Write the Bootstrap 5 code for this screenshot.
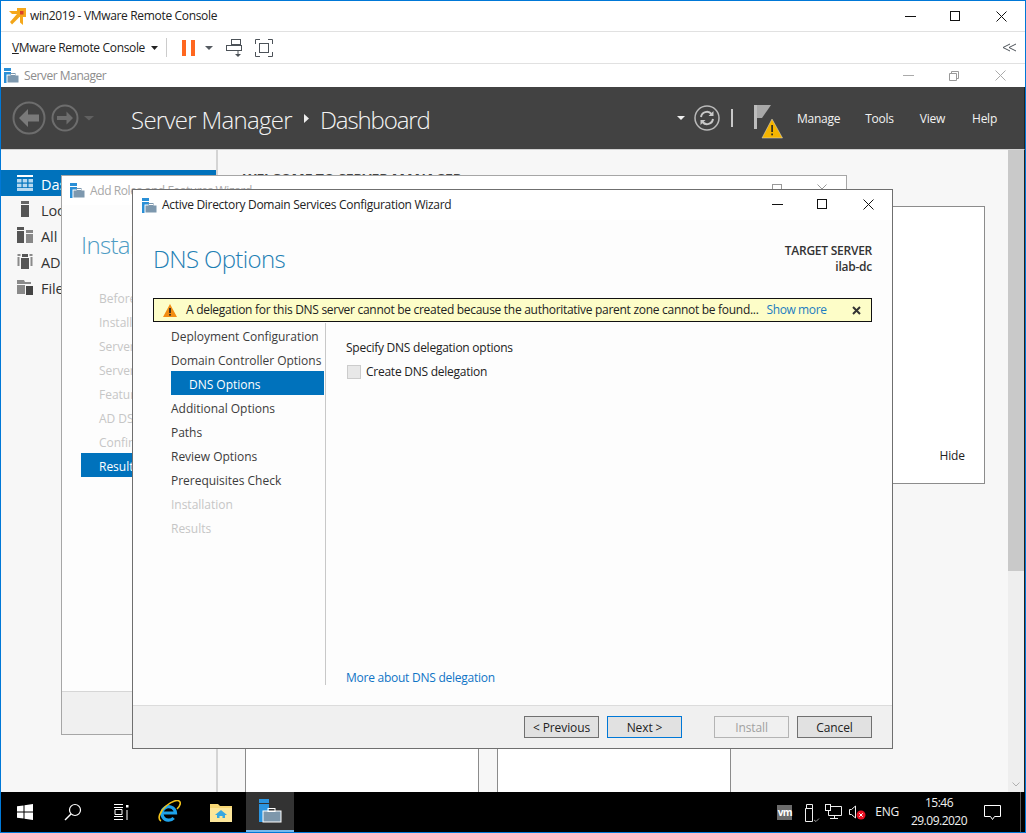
<!DOCTYPE html>
<html lang="en">
<head>
  <meta charset="UTF-8" />
  <title>win2019 - VMware Remote Console</title>
  <meta name="viewport" content="width=device-width, initial-scale=1" />
  <link href="https://cdn.jsdelivr.net/npm/bootstrap@5.3.3/dist/css/bootstrap.min.css" rel="stylesheet" />
  <script src="https://cdn.jsdelivr.net/npm/bootstrap@5.3.3/dist/js/bootstrap.bundle.min.js"></script>
  <style>
    html, body { margin: 0; background: #fff; overflow: hidden; }
    body { font-family: "Open Sans", "Liberation Sans", sans-serif; font-size: 12px; color: #222; line-height: 16px; letter-spacing: -.25px; }
    svg { display: block; flex: none; }

    /* spacing the grid utilities have no step for */
    .l7 { margin-left: 7px; } .l9 { margin-left: 9px; } .l5 { margin-left: 5px; } .l8 { margin-left: 8px; }
    .l10 { margin-left: 10px; } .l12 { margin-left: 12px; } .l13 { margin-left: 13px; }
    .l25 { margin-left: 25px; } .l26 { margin-left: 26px; } .l27 { margin-left: 27px; } .l32 { margin-left: 32px; } .l36 { margin-left: 36px; }
    .r9 { margin-right: 9px; } .r18 { margin-right: 18px; } .r19 { margin-right: 19px; }
    .r34 { margin-right: 34px; } .r35 { margin-right: 35px; } .r36 { margin-right: 36px; }

    /* outer vmrc window */
    .shell { position: relative; width: 1026px; height: 833px; border: 1px solid #0078d7; display: flex; flex-direction: column; overflow: hidden; }
    .vm-title { height: 31px; padding-left: 8px; border-bottom: 1px solid #e1e1e1; flex: none; letter-spacing: -.33px; }
    .vm-title span { margin-left: 4px; }
    .vm-tools { height: 32px; padding-left: 11px; border-bottom: 1px solid #e1e1e1; flex: none; letter-spacing: -.34px; }
    .vm-tools .under { text-decoration: underline; }
    .tool-caret { margin-left: 6px; }
    .tool-sep { width: 1px; height: 19px; background: #ccc; margin: 0 15px 0 8px; }
    .sm-title { height: 23px; padding-left: 3px; color: #8d8d8d; flex: none; letter-spacing: -.45px; }
    .sm-title span { margin-left: 5px; }
    .win-ctl { margin-left: auto; }

    /* server manager banner */
    .sm-bar { height: 63px; background: #424242; border-bottom: 1px solid #d2d2d2; border-right: 1px solid #222; flex: none; color: #fff; padding-left: 11px; }
    .sm-crumb { font-weight: 300; font-size: 24px; line-height: 30px; color: #f4f4f4; letter-spacing: -.7px; margin-top: 3px; }
    .crumb-first { margin-left: 36px; }
    .crumb-last { letter-spacing: -1.1px; }
    .crumb-arrow { margin: 0 11px 0 12px; }
    .sm-menu { font-size: 12px; color: #f2f2f2; padding-right: 27px; }
    .sm-menu span { margin-top: 2px; }
    .bar-rule { width: 2px; height: 18px; background: #c8c8c8; margin: 0 21px 0 11px; }
    .bar-flag { margin: 7px 13px 0 0; }

    /* server manager body */
    .sm-body { flex: 1 1 auto; min-height: 0; background: #f7f7f7; border-right: 1px solid #222; }
    .sm-side { width: 217px; flex: none; padding-top: 20px; border-right: 2px solid #d4d4d4; }
    .side-row { height: 26px; padding-left: 16px; font-size: 14.5px; white-space: nowrap; color: #333; overflow: hidden; letter-spacing: -.1px; }
    .side-row span { margin-left: 8px; padding-top: 3px; }
    .side-on { background: #0072bc; color: #fff; }
    .sm-main { width: 790px; flex: none; padding: 19px 0 0 25px; overflow: hidden; }
    .welcome { font-size: 14px; font-weight: 700; color: #444; line-height: 20px; letter-spacing: -.15px; white-space: nowrap; }
    .hide-box { width: 742px; height: 278px; margin-top: 17px; background: #fff; border: 1px solid #8c8c8c; padding-right: 19px; letter-spacing: -.1px; }
    .hide-box span { margin-top: 241px; }
    .sm-pair { margin: 16px 0 0 2px; gap: 18px; }
    .sm-tile { width: 234px; height: 400px; background: #fff; border: 1px solid #8c8c8c; }
    .sm-scroll { width: 16px; flex: none; background: #eee; display: flex; flex-direction: column; }
    .sm-thumb { height: 421px; background: #c9c9c9; }
    .sm-scroll svg { margin: auto 4px 5px; }

    /* taskbar */
    .taskbar { height: 40px; background: #000; flex: none; color: #f0f0f0; position: relative; }
    .tb-slot { width: 48px; height: 40px; display: flex; align-items: center; justify-content: center; flex: none; }
    .tb-wide { width: 53px; padding-left: 3px; }
    .tb-active { background: #333; border-bottom: 2px solid #76b9ed; }
    .tb-vm { width: 15px; height: 15px; background: #6b6b6b; color: #fff; font-size: 10px; font-weight: 700; line-height: 15px; text-align: center; letter-spacing: -.8px; }
    .tb-clock { width: 66px; text-align: center; line-height: 18px; margin-left: 7px; letter-spacing: -.5px; }
    .tb-note { margin: 0 19px 0 12px; }
    .tb-desk { width: 1px; align-self: stretch; background: #555; margin-right: 4px; }

    /* wizards sit over the desktop at their own place */
    .wiz { position: absolute; display: flex; flex-direction: column; background: #fdfdfd; }
    .wiz-back { left: 60px; top: 174px; width: 786px; height: 560px; border: 1px solid #a6a6a6; }
    .wiz-front { left: 131px; top: 188px; width: 761px; height: 560px; border: 1px solid #6f6f6f; }
    .wiz-title { height: 30px; background: #fff; padding-left: 9px; flex: none; letter-spacing: -.3px; }
    .wiz-title span { margin-left: 5px; }
    .wiz-front .win-ctl { margin-bottom: 2px; }
    .wiz-back .wiz-title { height: 29px; padding-left: 8px; color: #a8a8a8; letter-spacing: -.4px; }
    .wiz-back .win-ctl { margin-bottom: 4px; }
    .wiz-h1 { font-weight: 300; font-size: 24px; line-height: 32px; color: #1e80b4; letter-spacing: -.65px; }
    .wiz-back .wiz-h1 { color: #4d9cc4; margin: 24px 0 0 19px; }
    .back-nav { margin: 24px 0 0 19px; width: 240px; flex: 1 1 auto; }
    .back-nav .step { line-height: 28px; }
    .wiz-foot-back { height: 43px; background: #f0f0f0; border-top: 1px solid #d6d6d6; flex: none; }
    .step { height: 24px; line-height: 28px; white-space: nowrap; color: #3c3c3c; letter-spacing: -.02px; }
    .step-sub { padding-left: 18px; }
    .step-on { background: #0072bc; color: #fff; }
    .step-off { color: #c6c6c6; }

    .front-head { height: 78px; padding: 23px 20px 0 20px; flex: none; }
    .target { text-align: right; font-weight: 600; color: #333; line-height: 16px; }
    .warn-line { height: 24px; margin: 0 20px; background: #fdfdc8; border: 1px solid #111; padding: 0 10px 0 9px; flex: none; color: #222; white-space: nowrap; letter-spacing: -.29px; }
    .warn-line svg { margin-right: 9px; }
    .warn-more { color: #1b7cc0; margin-left: 8px; text-decoration: none; letter-spacing: -.4px; }
    .warn-line .warn-x { margin: 0 0 0 auto; }
    .front-body { flex: 1 1 auto; min-height: 0; padding-left: 38px; }
    .front-nav { width: 153px; flex: none; padding-top: 1px; }
    .front-rule { width: 1px; background: #c8c8c8; margin: 1px 0 20px 1px; flex: none; }
    .front-pane { flex: 1 1 auto; padding: 18px 0 19px 20px; }
    .dns-check { width: 14px; height: 14px; margin: 0 5px 0 1px; border: 1px solid #ccc; border-radius: 0 !important; background-color: #e8e8e8; opacity: 1 !important; }
    .pane-link { margin-top: auto; color: #0f74c6; text-decoration: none; }
    .wiz-foot { height: 43px; background: #f0f0f0; border-top: 1px solid #dcdcdc; padding: 10px 20px 0 0; flex: none; }
    .wiz-btn { width: 75px; height: 22px; padding: 0; font-size: 12px; line-height: 22px; border: 1px solid #707070; border-radius: 0; background: #e1e1e1; color: #222; letter-spacing: -.1px; }
    .wiz-btn-def { border-color: #0078d7; }
    .wiz-btn:disabled { opacity: 1; background: #f0f0f0; border-color: #b4b4b4; color: #a0a0a0; }
  </style>
</head>
<body>
<div class="shell">

  <!-- vmrc title -->
  <div class="vm-title d-flex align-items-center">
    <svg width="17" height="17" viewBox="0 0 17 17"><path d="M0 3h8v3H3z" fill="#f5a81c"/><path d="M8 6l2.500 3L3 16.500 1 14z" fill="#f2a519"/><path d="M11 9h3v8l-3-2.500z" fill="#f5a81c"/><rect x="8" width="9" height="9" fill="#f5a81c"/><rect x="11" y="3" width="3.500" height="3.500" fill="#d9442a"/></svg>
    <span>win2019 - VMware Remote Console</span>
    <div class="win-ctl d-flex">
      <svg class="r34" width="11" height="11" viewBox="0 0 11 11"><path d="M0 5.500h11" stroke="#111"/></svg>
      <svg class="r36" width="10" height="10" viewBox="0 0 10 10"><rect x=".5" y=".5" width="9" height="9" fill="none" stroke="#111"/></svg>
      <svg class="r18" width="11" height="11" viewBox="0 0 11 11"><path d="M.5.5l10 10M10.500.5l-10 10" stroke="#111"/></svg>
    </div>
  </div>

  <!-- vmrc toolbar -->
  <div class="vm-tools d-flex align-items-center">
    <span><span class="under">V</span>Mware Remote Console</span>
    <svg class="tool-caret" width="7" height="4" viewBox="0 0 7 4"><path d="M0 0h7L3.500 4z" fill="#222"/></svg>
    <div class="tool-sep"></div>
    <svg width="13" height="16" viewBox="0 0 13 16"><rect width="4" height="16" fill="#ff671f"/><rect x="9" width="4" height="16" fill="#ff671f"/></svg>
    <svg class="l10" width="8" height="4" viewBox="0 0 8 4"><path d="M0 0h8L4 4z" fill="#555b61"/></svg>
    <svg class="l13" width="17" height="18" viewBox="0 0 17 18"><g fill="none" stroke="#4c5258"><rect x="5.500" y=".5" width="9" height="5"/><rect x=".5" y="6.500" width="15" height="5"/></g><path d="M12 12v3" stroke="#4c5258"/><path d="M9 15h6l-3 3z" fill="#4c5258"/></svg>
    <svg class="l12" width="18" height="18" viewBox="0 0 18 18"><g fill="none" stroke="#4c5258"><path d="M.5 5V.5H5M13 .5h4.500V5M17.500 13v4.500H13M5 17.500H.5V13"/><rect x="4.500" y="4.500" width="9" height="9"/></g></svg>
    <svg class="win-ctl r9" width="14" height="9" viewBox="0 0 14 9"><path d="M8 1L1 4.500 8 8M14 1L7 4.500 14 8" fill="none" stroke="#4c5258"/></svg>
  </div>

  <!-- server manager title -->
  <div class="sm-title d-flex align-items-center">
    <svg width="15" height="15" viewBox="0 0 15 15"><rect width="7" height="3" fill="#2a8fd6"/><rect y="4" width="7" height="11" fill="#2a8fd6"/><rect x="3" y="7" width="12" height="8" fill="#7d98ae" stroke="#fff"/><rect x="7" y="5.500" width="4" height="2" fill="none" stroke="#7d98ae"/></svg>
    <span>Server Manager</span>
    <div class="win-ctl d-flex align-items-center">
      <svg class="r35" width="11" height="11" viewBox="0 0 11 11"><path d="M0 5.500h11" stroke="#aaa"/></svg>
      <svg class="r36" width="10" height="10" viewBox="0 0 10 10"><path d="M.5 2.500h7v7h-7zM2.500 2.500v-2h7v7h-2" fill="none" stroke="#999"/></svg>
      <svg class="r19" width="11" height="11" viewBox="0 0 11 11"><path d="M.5.5l10 10M10.500.5l-10 10" stroke="#aaa"/></svg>
    </div>
  </div>

  <!-- banner -->
  <div class="sm-bar d-flex align-items-center">
    <svg width="83" height="34" viewBox="0 0 83 34"><g fill="none" stroke="#6d6d6d"><circle cx="17" cy="17" r="15.500" stroke-width="2"/><circle cx="53" cy="17" r="12.500" stroke-width="2"/></g><path d="M7 17l9-9v5.500h11v7H16V26z" fill="#7a7a7a"/><path d="M61 17l-6.500-6.500V15H45v4h9.500v4.500z" fill="#6d6d6d"/><path d="M72 15h10l-5 4.500z" fill="#606060"/></svg>
    <div class="sm-crumb crumb-first">Server Manager</div>
    <svg class="crumb-arrow" width="5" height="9" viewBox="0 0 5 9"><path d="M0 0l5 4.500L0 9z" fill="#eee"/></svg>
    <div class="sm-crumb crumb-last">Dashboard</div>
    <div class="win-ctl d-flex align-items-center sm-menu">
      <svg width="8" height="4" viewBox="0 0 8 4"><path d="M0 0h8L4 4z" fill="#f0f0f0"/></svg>
      <svg class="l9" width="26" height="26" viewBox="0 0 26 26"><circle cx="13" cy="13" r="12" fill="none" stroke="#b9b9b9" stroke-width="1.500"/><path d="M7 12a6 6 0 0 1 10.500-3M19 14a6 6 0 0 1-10.500 3" fill="none" stroke="#c8c8c8" stroke-width="2"/><path d="M19.500 6v5h-5zM6.500 20v-5h5z" fill="#c8c8c8"/></svg>
      <div class="bar-rule"></div>
      <svg class="bar-flag" width="30" height="35" viewBox="0 0 30 35"><rect y="1" width="3" height="24" fill="#bdbdbd"/><path d="M3 1h14L8 14H3z" fill="#a8a8a8"/><path d="M18 15l10.500 19H8z" fill="#f5b400" stroke="#d9d9d9" stroke-width=".5"/><rect x="17.300" y="21" width="1.600" height="7" fill="#222"/><rect x="17.300" y="29.500" width="1.600" height="1.800" fill="#222"/></svg>
      <span>Manage</span><span class="l25">Tools</span><span class="l26">View</span><span class="l27">Help</span>
    </div>
  </div>

  <!-- desktop of server manager -->
  <div class="sm-body d-flex">
    <div class="sm-side">
      <div class="side-row side-on d-flex align-items-center"><svg width="16" height="16" viewBox="0 0 16 16"><rect width="16" height="2" fill="#fff"/><g fill="#b8d9f0"><rect y="4" width="4.500" height="3.500"/><rect x="5.700" y="4" width="4.500" height="3.500"/><rect x="11.500" y="4" width="4.500" height="3.500"/><rect y="8.700" width="4.500" height="3.500"/><rect x="5.700" y="8.700" width="4.500" height="3.500"/><rect x="11.500" y="8.700" width="4.500" height="3.500"/><rect y="13" width="16" height="3"/></g></svg><span>Dashboard</span></div>
      <div class="side-row d-flex align-items-center"><svg width="16" height="16" viewBox="0 0 16 16"><rect x="4" width="8" height="3" fill="#666"/><rect x="4" y="4" width="8" height="12" fill="#555"/></svg><span>Local Server</span></div>
      <div class="side-row d-flex align-items-center"><svg width="16" height="16" viewBox="0 0 16 16"><rect width="7" height="3" fill="#555"/><rect y="4" width="7" height="12" fill="#555"/><rect x="9" y="3" width="7" height="3" fill="#888"/><rect x="9" y="7" width="7" height="9" fill="#888"/></svg><span>All Servers</span></div>
      <div class="side-row d-flex align-items-center"><svg width="16" height="16" viewBox="0 0 16 16"><path d="M.5 1h3v2H.5zM12.500 1h3v2h-3zM.5 4h2v9h-2zM13.500 4h2v9h-2z" fill="#8a8a8a"/><rect x="5" y="1" width="6" height="3" fill="#555"/><rect x="4" y="5" width="8" height="11" fill="#555"/></svg><span>AD DS</span></div>
      <div class="side-row d-flex align-items-center"><svg width="16" height="16" viewBox="0 0 16 16"><path d="M0 1h7l1 2h6v2H0z" fill="#8a8a8a"/><rect y="6" width="8" height="9" fill="#8a8a8a"/><rect x="9" y="7" width="7" height="9" fill="#444"/></svg><span>File and Storage Services</span></div>
    </div>
    <div class="sm-main">
      <div class="welcome">WELCOME TO SERVER MANAGER</div>
      <div class="hide-box d-flex justify-content-end"><span>Hide</span></div>
      <div class="sm-pair d-flex"><div class="sm-tile"></div><div class="sm-tile"></div></div>
    </div>
    <div class="sm-scroll">
      <div class="sm-thumb"></div>
      <svg width="8" height="5" viewBox="0 0 8 5"><path d="M.5.5L4 4 7.500.5" fill="none" stroke="#b0b0b0"/></svg>
    </div>
  </div>

  <!-- taskbar -->
  <div class="taskbar d-flex">
    <div class="tb-slot"><svg width="16" height="16" viewBox="0 0 16 16"><path d="M0 2.300l6.500-.9v6.100H0zM7.500 1.300L16 0v7.500H7.500zM0 8.500h6.500v6.100L0 13.700zM7.500 8.500H16V16l-8.500-1.300z" fill="#fff"/></svg></div>
    <div class="tb-slot"><svg width="18" height="18" viewBox="0 0 18 18"><circle cx="11" cy="7" r="5.500" fill="none" stroke="#fff" stroke-width="1.200"/><path d="M7 11l-6 6" stroke="#fff" stroke-width="1.500"/></svg></div>
    <div class="tb-slot"><svg width="16" height="16" viewBox="0 0 16 16"><path d="M1 .5h9M1 15.500h9M2 5.500h7v5H2zM1 12.500h9M1 3.500h9" fill="none" stroke="#fff"/><rect x="13" y="1" width="2.500" height="2.500" fill="#fff"/><path d="M14 6v10" stroke="#fff"/></svg></div>
    <div class="tb-slot"><svg width="24" height="24" viewBox="0 0 24 24"><path d="M5.500 13h13a6.800 6.800 0 1 0-1.800 5" fill="none" stroke="#1ea2ea" stroke-width="3.200"/><path d="M4 21C0 19 3 11 9 6S21-1 23 2c1 2-1 5-3 7" fill="none" stroke="#f2c21a" stroke-width="1.600"/></svg></div>
    <div class="tb-slot tb-wide"><svg width="22" height="19" viewBox="0 0 22 19"><path d="M0 1h8l2 2h12v16H0z" fill="#f7d774"/><rect y="5" width="22" height="14" fill="#fce69a"/><path d="M7 11h8v4H7z" fill="#37a7e0"/><path d="M5 12l6-5 6 5z" fill="#37a7e0"/><rect x="9.500" y="13" width="3" height="3" fill="#fce69a"/></svg></div>
    <div class="tb-slot tb-active"><svg width="24" height="24" viewBox="0 0 24 24"><rect x="1" width="10" height="4" fill="#2b95e0"/><rect x="1" y="5" width="10" height="18" fill="#2b95e0"/><rect x="5" y="12" width="18" height="11" fill="#7e97ab" stroke="#fff"/><rect x="10" y="9.500" width="7" height="3" fill="none" stroke="#fff"/></svg></div>
    <div class="d-flex align-items-center win-ctl">
      <div class="tb-vm">vm</div>
      <svg class="l12" width="16" height="19" viewBox="0 0 16 19"><path d="M2.500 1.500h6v4h-6zM1.500 5.500h7v13h-7z" fill="none" stroke="#eee"/><path d="M10 17l2 1.500 3-3" fill="none" stroke="#999"/></svg>
      <svg class="l5" width="17" height="16" viewBox="0 0 17 16"><path d="M3.500 2.500h13v9h-13zM5 14.500h8M9.500 11.500v3" fill="none" stroke="#eee"/><rect x=".5" y=".5" width="5" height="6" fill="#000" stroke="#eee"/></svg>
      <svg class="l7" width="17" height="16" viewBox="0 0 17 16"><path d="M.5 5.500h2l4-3.500v12l-4-3.500h-2z" fill="none" stroke="#eee"/><circle cx="12" cy="11" r="4.500" fill="#e81123"/><path d="M10.300 9.300l3.400 3.400M13.700 9.300l-3.400 3.400" stroke="#fff"/></svg>
      <span class="l9">ENG</span>
      <div class="tb-clock"><div>15:46</div><div>29.09.2020</div></div>
      <svg class="tb-note" width="17" height="15" viewBox="0 0 17 15"><path d="M.5.5h16v11h-6l-2 3-2-3h-6z" fill="none" stroke="#fff"/></svg>
      <div class="tb-desk"></div>
    </div>
  </div>

  <!-- Add Roles wizard, inactive behind -->
  <div class="wiz wiz-back">
    <div class="wiz-title d-flex align-items-center">
      <svg width="15" height="15" viewBox="0 0 15 15"><rect width="7" height="3" fill="#2a8fd6"/><rect y="4" width="7" height="11" fill="#2a8fd6"/><rect x="3" y="7" width="12" height="8" fill="#7d98ae" stroke="#fff"/><rect x="7" y="5.500" width="4" height="2" fill="none" stroke="#7d98ae"/></svg>
      <span>Add Roles and Features Wizard</span>
      <div class="win-ctl d-flex">
        <svg class="r35" width="10" height="10" viewBox="0 0 10 10"><rect x=".5" y=".5" width="9" height="9" fill="none" stroke="#999"/></svg>
        <svg class="r19" width="10" height="10" viewBox="0 0 10 10"><path d="M.5.5l9 9M9.500.5l-9 9" stroke="#999"/></svg>
      </div>
    </div>
    <div class="wiz-h1">Installation progress</div>
    <div class="back-nav">
      <div class="step step-sub step-off">Before You Begin</div>
      <div class="step step-sub step-off">Installation Type</div>
      <div class="step step-sub step-off">Server Selection</div>
      <div class="step step-sub step-off">Server Roles</div>
      <div class="step step-sub step-off">Features</div>
      <div class="step step-sub step-off">AD DS</div>
      <div class="step step-sub step-off">Confirmation</div>
      <div class="step step-sub step-on">Results</div>
    </div>
    <div class="wiz-foot-back"></div>
  </div>

  <!-- AD DS wizard -->
  <div class="wiz wiz-front">
    <div class="wiz-title d-flex align-items-center">
      <svg width="15" height="15" viewBox="0 0 15 15"><rect width="7" height="3" fill="#2a8fd6"/><rect y="4" width="7" height="11" fill="#2a8fd6"/><rect x="3" y="7" width="12" height="8" fill="#7d98ae" stroke="#fff"/><rect x="7" y="5.500" width="4" height="2" fill="none" stroke="#7d98ae"/></svg>
      <span>Active Directory Domain Services Configuration Wizard</span>
      <div class="win-ctl d-flex">
        <svg class="r34" width="11" height="11" viewBox="0 0 11 11"><path d="M0 5.500h11" stroke="#111"/></svg>
        <svg class="r36" width="10" height="10" viewBox="0 0 10 10"><rect x=".5" y=".5" width="9" height="9" fill="none" stroke="#111"/></svg>
        <svg class="r18" width="11" height="11" viewBox="0 0 11 11"><path d="M.5.5l10 10M10.500.5l-10 10" stroke="#111"/></svg>
      </div>
    </div>
    <div class="front-head d-flex justify-content-between">
      <div class="wiz-h1">DNS Options</div>
      <div class="target"><div>TARGET SERVER</div><div>ilab-dc</div></div>
    </div>
    <div class="warn-line d-flex align-items-center">
      <svg width="14" height="13" viewBox="0 0 14 13"><path d="M7 0l7 13H0z" fill="#f28c13"/><rect x="6.200" y="4" width="1.600" height="5" fill="#222"/><rect x="6.200" y="10" width="1.600" height="1.600" fill="#222"/></svg>
      <span>A delegation for this DNS server cannot be created because the authoritative parent zone cannot be found...</span>
      <a class="warn-more" href="#">Show more</a>
      <svg class="warn-x" width="9" height="9" viewBox="0 0 9 9"><path d="M1 1l7 7M8 1L1 8" stroke="#333" stroke-width="2"/></svg>
    </div>
    <div class="front-body d-flex">
      <div class="front-nav">
        <div class="step">Deployment Configuration</div>
        <div class="step">Domain Controller Options</div>
        <div class="step step-sub step-on">DNS Options</div>
        <div class="step">Additional Options</div>
        <div class="step">Paths</div>
        <div class="step">Review Options</div>
        <div class="step">Prerequisites Check</div>
        <div class="step step-off">Installation</div>
        <div class="step step-off">Results</div>
      </div>
      <div class="front-rule"></div>
      <div class="front-pane d-flex flex-column">
        <div class="mb-2">Specify DNS delegation options</div>
        <div class="d-flex align-items-center"><input class="form-check-input dns-check mt-0" type="checkbox" disabled /><span>Create DNS delegation</span></div>
        <a class="pane-link" href="#">More about DNS delegation</a>
      </div>
    </div>
    <div class="wiz-foot d-flex justify-content-end">
      <button class="btn wiz-btn" type="button">&lt; Previous</button>
      <button class="btn wiz-btn wiz-btn-def l8" type="button">Next &gt;</button>
      <button class="btn wiz-btn l32" type="button" disabled>Install</button>
      <button class="btn wiz-btn l8" type="button">Cancel</button>
    </div>
  </div>

</div>
</body>
</html>
